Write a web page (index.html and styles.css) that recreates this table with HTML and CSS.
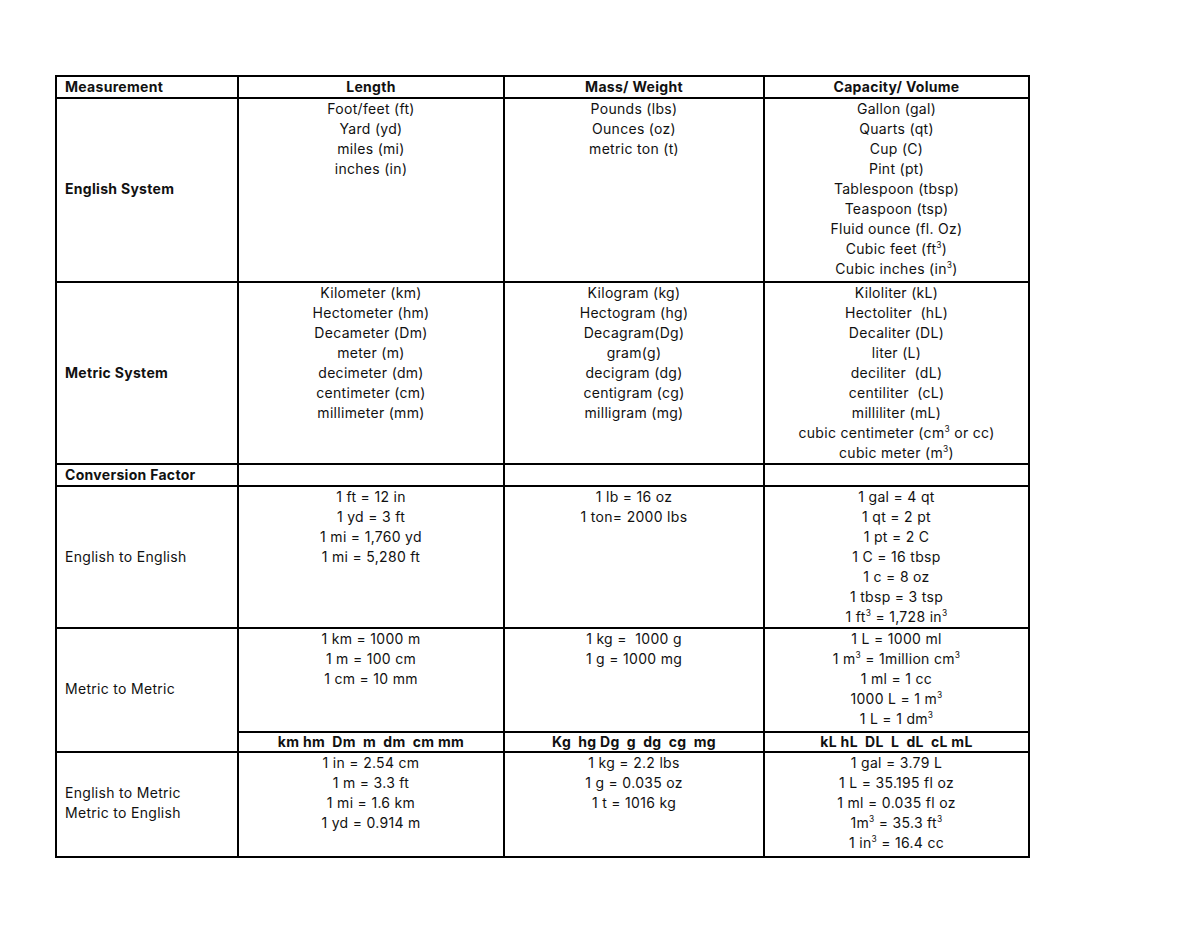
FILE: index.html
```html
<!DOCTYPE html>
<html>
<head>
<meta charset="utf-8">
<link rel="stylesheet" href="styles.css">
</head>
<body>
<div class="page">
<table class="chart">
<colgroup>
<col class="c1"><col class="c2"><col class="c3"><col class="c4">
</colgroup>
<tr class="head">
<td class="label">Measurement</td>
<td>Length</td>
<td>Mass/ Weight</td>
<td>Capacity/ Volume</td>
</tr>
<tr class="major eng">
<td class="label b">English System</td>
<td>Foot/feet (ft)<br>Yard (yd)<br>miles (mi)<br>inches (in)</td>
<td>Pounds (lbs)<br>Ounces (oz)<br>metric ton (t)</td>
<td>Gallon (gal)<br>Quarts (qt)<br>Cup (C)<br>Pint (pt)<br>Tablespoon (tbsp)<br>Teaspoon (tsp)<br>Fluid ounce (fl. Oz)<br>Cubic feet (ft<sup>3</sup>)<br>Cubic inches (in<sup>3</sup>)</td>
</tr>
<tr class="major">
<td class="label b">Metric System</td>
<td>Kilometer (km)<br>Hectometer (hm)<br>Decameter (Dm)<br>meter (m)<br>decimeter (dm)<br>centimeter (cm)<br>millimeter (mm)</td>
<td>Kilogram (kg)<br>Hectogram (hg)<br>Decagram(Dg)<br>gram(g)<br>decigram (dg)<br>centigram (cg)<br>milligram (mg)</td>
<td>Kiloliter (kL)<br>Hectoliter &nbsp;(hL)<br>Decaliter (DL)<br>liter (L)<br>deciliter &nbsp;(dL)<br>centiliter &nbsp;(cL)<br>milliliter (mL)<br>cubic centimeter (cm<sup>3</sup> or cc)<br>cubic meter (m<sup>3</sup>)</td>
</tr>
<tr class="conv">
<td class="label b">Conversion Factor</td>
<td></td><td></td><td></td>
</tr>
<tr class="major">
<td class="label">English to English</td>
<td>1 ft = 12 in<br>1 yd = 3 ft<br>1 mi = 1,760 yd<br>1 mi = 5,280 ft</td>
<td>1 lb = 16 oz<br>1 ton= 2000 lbs</td>
<td>1 gal = 4 qt<br>1 qt = 2 pt<br>1 pt = 2 C<br>1 C = 16 tbsp<br>1 c = 8 oz<br>1 tbsp = 3 tsp<br>1 ft<sup>3</sup> = 1,728 in<sup>3</sup></td>
</tr>
<tr class="major m2m">
<td class="label" rowspan="2">Metric to Metric</td>
<td>1 km = 1000 m<br>1 m = 100 cm<br>1 cm = 10 mm</td>
<td>1 kg = &nbsp;1000 g<br>1 g = 1000 mg</td>
<td>1 L = 1000 ml<br>1 m<sup>3</sup> = 1million cm<sup>3</sup><br>1 ml = 1 cc<br>1000 L = 1 m<sup>3</sup><br>1 L = 1 dm<sup>3</sup></td>
</tr>
<tr class="prefix">
<td>km hm &nbsp;Dm &nbsp;m &nbsp;dm &nbsp;cm mm</td>
<td>Kg &nbsp;hg Dg &nbsp;g &nbsp;dg &nbsp;cg &nbsp;mg</td>
<td>kL hL &nbsp;DL &nbsp;L &nbsp;dL &nbsp;cL mL</td>
</tr>
<tr class="last">
<td class="label">English to Metric<br>Metric to English</td>
<td>1 in = 2.54 cm<br>1 m = 3.3 ft<br>1 mi = 1.6 km<br>1 yd = 0.914 m</td>
<td>1 kg = 2.2 lbs<br>1 g = 0.035 oz<br>1 t = 1016 kg</td>
<td>1 gal = 3.79 L<br>1 L = 35.195 fl oz<br>1 ml = 0.035 fl oz<br>1m<sup>3</sup> = 35.3 ft<sup>3</sup><br>1 in<sup>3</sup> = 16.4 cc</td>
</tr>
</table>
</div>
</body>
</html>
```
FILE: styles.css
```css
html, body {
  margin: 0;
  padding: 0;
  background: #fff;
}
.page {
  padding: 75px 0 0 55px;
}
.chart {
  border-collapse: collapse;
  table-layout: fixed;
  width: 973px;
  font-family: Inter, "Open Sans", sans-serif;
  font-size: 14px;
  letter-spacing: 0.3px;
  line-height: 20px;
  color: #111;
}
.c1 { width: 182px; }
.c2 { width: 266px; }
.c3 { width: 260px; }
.c4 { width: 265px; }
.chart td {
  border: 2px solid #000;
  padding: 0 8px;
  text-align: center;
  vertical-align: top;
}
.chart td.label {
  text-align: left;
  vertical-align: middle;
}
.chart .b { font-weight: 700; }
.head td {
  font-weight: 700;
  border-bottom-width: 1px;
  height: 18px;
}
.conv td {
  border-top: 1px solid #555;
  height: 20px;
}
.prefix td {
  font-weight: 700;
  border-bottom-width: 1px;
  line-height: 18px;
}
.eng td { padding-bottom: 2px; }
.m2m td { padding-bottom: 2px; }
.last td { padding-bottom: 3px; }
.chart sup {
  font-size: 0.6em;
  line-height: 0;
  vertical-align: super;
}
```
